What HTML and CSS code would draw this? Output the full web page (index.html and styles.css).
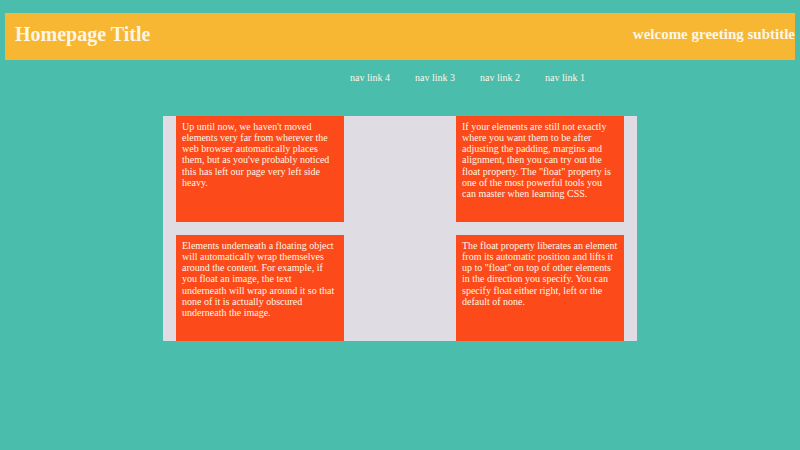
FILE: index.html
```html
<!DOCTYPE html>
<html>
<head>
<meta charset="utf-8">
<title>Homepage</title>
<link rel="stylesheet" href="styles.css">
</head>
<body>
<header class="site-header">
  <h1 class="title">Homepage Title</h1>
  <h2 class="subtitle">welcome greeting subtitle</h2>
</header>
<nav class="nav">
  <a class="nav-link" href="#">nav link 1</a>
  <a class="nav-link" href="#">nav link 2</a>
  <a class="nav-link" href="#">nav link 3</a>
  <a class="nav-link" href="#">nav link 4</a>
</nav>
<main class="content">
  <div class="card">Up until now, we haven't moved elements very far from wherever the web browser automatically places them, but as you've probably noticed this has left our page very left side heavy.</div>
  <div class="card">If your elements are still not exactly where you want them to be after adjusting the padding, margins and alignment, then you can try out the float property. The "float" property is one of the most powerful tools you can master when learning CSS.</div>
  <div class="card">Elements underneath a floating object will automatically wrap themselves around the content. For example, if you float an image, the text underneath will wrap around it so that none of it is actually obscured underneath the image.</div>
  <div class="card">The float property liberates an element from its automatic position and lifts it up to "float" on top of other elements in the direction you specify. You can specify float either right, left or the default of none.</div>
</main>
</body>
</html>
```
FILE: styles.css
```css
html, body {
  margin: 0;
  padding: 0;
}
body {
  background: #4abdac;
  font-family: "Liberation Serif", "Times New Roman", serif;
  color: #fdf6e6;
  padding: 13px 5px 0;
  min-height: 450px;
  box-sizing: border-box;
}
.site-header {
  background: #f7b733;
  height: 47px;
  display: flex;
  align-items: center;
  justify-content: space-between;
  padding-left: 10px;
}
.title {
  margin: 0 0 4px;
  font-size: 20px;
  font-weight: bold;
  line-height: 23px;
}
.subtitle {
  margin: 0 0 5px;
  font-size: 15px;
  font-weight: bold;
  line-height: 17px;
}
.nav {
  display: flex;
  flex-direction: row-reverse;
  gap: 25px;
  padding-right: 210px;
  margin-top: 12px;
  font-size: 10px;
  line-height: 11.5px;
}
.nav-link {
  color: #fdf6e6;
  text-decoration: none;
}
.content {
  width: 474px;
  margin: 32px auto 0;
  background: #dfdce3;
  padding: 0 13px;
  box-sizing: border-box;
  display: grid;
  grid-template-columns: 168px 168px;
  grid-auto-rows: 106px;
  justify-content: space-between;
  row-gap: 13px;
}
.card {
  background: #fc4a1a;
  font-size: 10px;
  line-height: 11.3px;
  padding: 5px 6px;
}
```
